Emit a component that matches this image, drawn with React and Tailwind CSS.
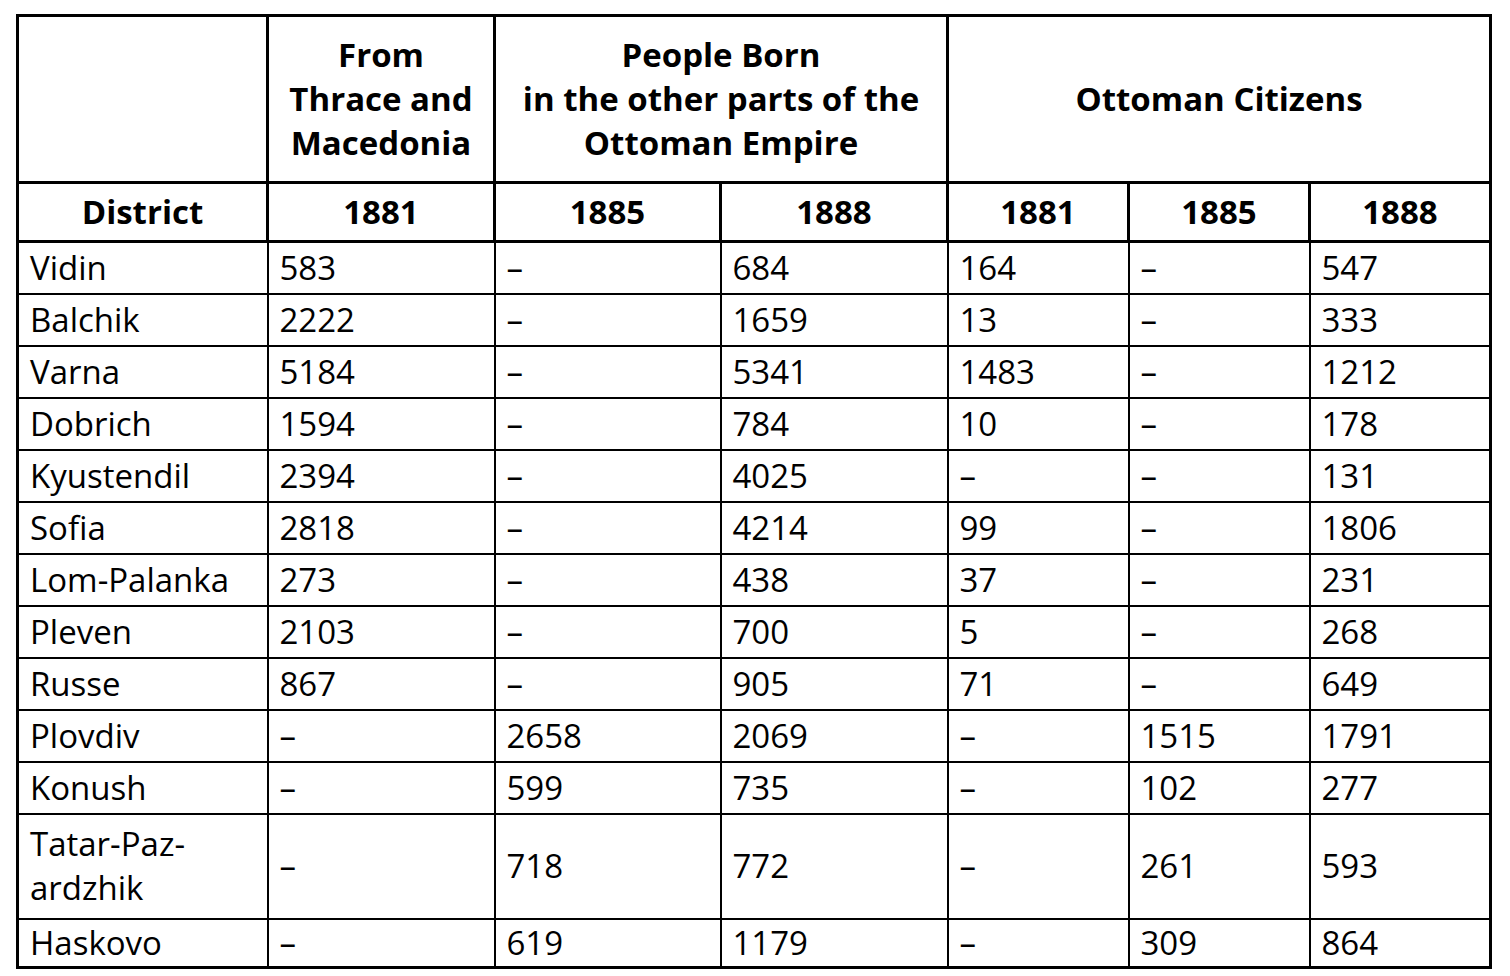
import React from "react";

const rows = [
  ["Vidin", "583", "–", "684", "164", "–", "547"],
  ["Balchik", "2222", "–", "1659", "13", "–", "333"],
  ["Varna", "5184", "–", "5341", "1483", "–", "1212"],
  ["Dobrich", "1594", "–", "784", "10", "–", "178"],
  ["Kyustendil", "2394", "–", "4025", "–", "–", "131"],
  ["Sofia", "2818", "–", "4214", "99", "–", "1806"],
  ["Lom-Palanka", "273", "–", "438", "37", "–", "231"],
  ["Pleven", "2103", "–", "700", "5", "–", "268"],
  ["Russe", "867", "–", "905", "71", "–", "649"],
  ["Plovdiv", "–", "2658", "2069", "–", "1515", "1791"],
  ["Konush", "–", "599", "735", "–", "102", "277"],
  [["Tatar-Paz-", "ardzhik"], "–", "718", "772", "–", "261", "593"],
  ["Haskovo", "–", "619", "1179", "–", "309", "864"],
];

const App = () => {
  return (
    <div className="bg-white w-[1510px] h-[976px] pt-[14px] pl-[16px] text-black font-['Open_Sans',sans-serif]">
      <table className="border-collapse table-fixed border-[3px] border-black text-[33px] leading-[44px]">
        <colgroup>
          <col className="w-[250px]" />
          <col className="w-[227px]" />
          <col className="w-[226px]" />
          <col className="w-[227px]" />
          <col className="w-[181px]" />
          <col className="w-[181px]" />
          <col className="w-[181px]" />
        </colgroup>
        <thead className="font-bold">
          <tr className="h-[167px]">
            <th className="border-[3px] border-black"></th>
            <th className="border-[3px] border-black">
              From
              <br />
              Thrace and
              <br />
              Macedonia
            </th>
            <th colSpan={2} className="border-[3px] border-black">
              People Born
              <br />
              in the other parts of the
              <br />
              Ottoman Empire
            </th>
            <th colSpan={3} className="border-[3px] border-black">
              Ottoman Citizens
            </th>
          </tr>
          <tr className="h-[59px]">
            {["District", "1881", "1885", "1888", "1881", "1885", "1888"].map((h, i) => (
              <th key={i} className="border-[3px] border-black">
                {h}
              </th>
            ))}
          </tr>
        </thead>
        <tbody>
          {rows.map((r, i) => (
            <tr key={i} className={Array.isArray(r[0]) ? "h-[105px]" : i === rows.length - 1 ? "h-[49px]" : "h-[52px]"}>
              {r.map((c, j) => (
                <td key={j} className="border-2 border-black px-[11px] align-middle">
                  {Array.isArray(c) ? (
                    <>
                      {c[0]}
                      <br />
                      {c[1]}
                    </>
                  ) : (
                    c
                  )}
                </td>
              ))}
            </tr>
          ))}
        </tbody>
      </table>
    </div>
  );
};

export default App;
